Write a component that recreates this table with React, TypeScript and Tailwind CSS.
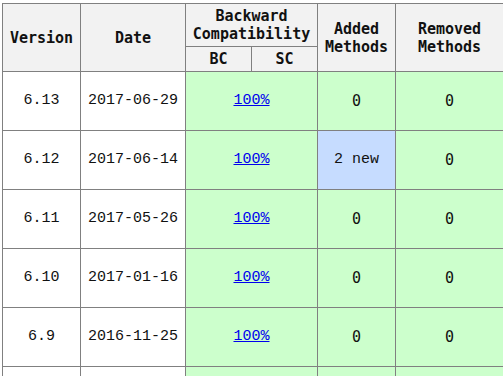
import React from "react";

const rows = [
  { v: "6.13", d: "2017-06-29", added: "0" },
  { v: "6.12", d: "2017-06-14", added: "2 new" },
  { v: "6.11", d: "2017-05-26", added: "0" },
  { v: "6.10", d: "2017-01-16", added: "0" },
  { v: "6.9", d: "2016-11-25", added: "0" },
];

const dv = "font-['DejaVu_Sans_Mono',monospace]";
const lm = "font-['Liberation_Mono',monospace]";

export default function App() {
  return (
    <div className="bg-white w-[503px] h-[376px] overflow-hidden pl-[2px] pt-[3px]">
      <table className="border-collapse table-fixed w-[501px] text-[15px] text-[#111] leading-[18px]">
        <colgroup>
          <col className="w-[78px]" />
          <col className="w-[105px]" />
          <col className="w-[66px]" />
          <col className="w-[66px]" />
          <col className="w-[78px]" />
          <col className="w-[108px]" />
        </colgroup>
        <thead>
          <tr className="h-[43px]">
            <th rowSpan={2} className={`border border-[#808080] bg-[#f2f2f2] font-bold ${dv}`}>Version</th>
            <th rowSpan={2} className={`border border-[#808080] bg-[#f2f2f2] font-bold ${dv}`}>Date</th>
            <th colSpan={2} className={`border border-[#808080] bg-[#f2f2f2] font-bold ${dv}`}>Backward<br />Compatibility</th>
            <th rowSpan={2} className={`border border-[#808080] bg-[#f2f2f2] font-bold ${dv}`}>Added<br />Methods</th>
            <th rowSpan={2} className={`border border-[#808080] bg-[#f2f2f2] font-bold ${dv}`}>Removed<br />Methods</th>
          </tr>
          <tr className="h-[25px]">
            <th className={`border border-[#808080] bg-[#f2f2f2] font-bold ${dv}`}>BC</th>
            <th className={`border border-[#808080] bg-[#f2f2f2] font-bold ${dv}`}>SC</th>
          </tr>
        </thead>
        <tbody>
          {rows.map((r) => (
            <tr key={r.v} className="h-[59px]">
              <td className={`border border-[#808080] text-center ${lm}`}>{r.v}</td>
              <td className={`border border-[#808080] text-center ${lm}`}>{r.d}</td>
              <td colSpan={2} className={`border border-[#808080] text-center bg-[#ccffcc] ${lm}`}>
                <a href="#" className="text-[#0000ee] underline">100%</a>
              </td>
              {r.added === "0" ? (
                <td className={`border border-[#808080] text-center bg-[#ccffcc] ${dv}`}>0</td>
              ) : (
                <td className={`border border-[#808080] text-center bg-[#c6dcff] ${lm}`}>{r.added}</td>
              )}
              <td className={`border border-[#808080] text-center bg-[#ccffcc] ${dv}`}>0</td>
            </tr>
          ))}
          <tr className="h-[59px]">
            <td className="border border-[#808080]"></td>
            <td className="border border-[#808080]"></td>
            <td colSpan={2} className="border border-[#808080] bg-[#ccffcc]"></td>
            <td className="border border-[#808080] bg-[#ccffcc]"></td>
            <td className="border border-[#808080] bg-[#ccffcc]"></td>
          </tr>
        </tbody>
      </table>
    </div>
  );
}
